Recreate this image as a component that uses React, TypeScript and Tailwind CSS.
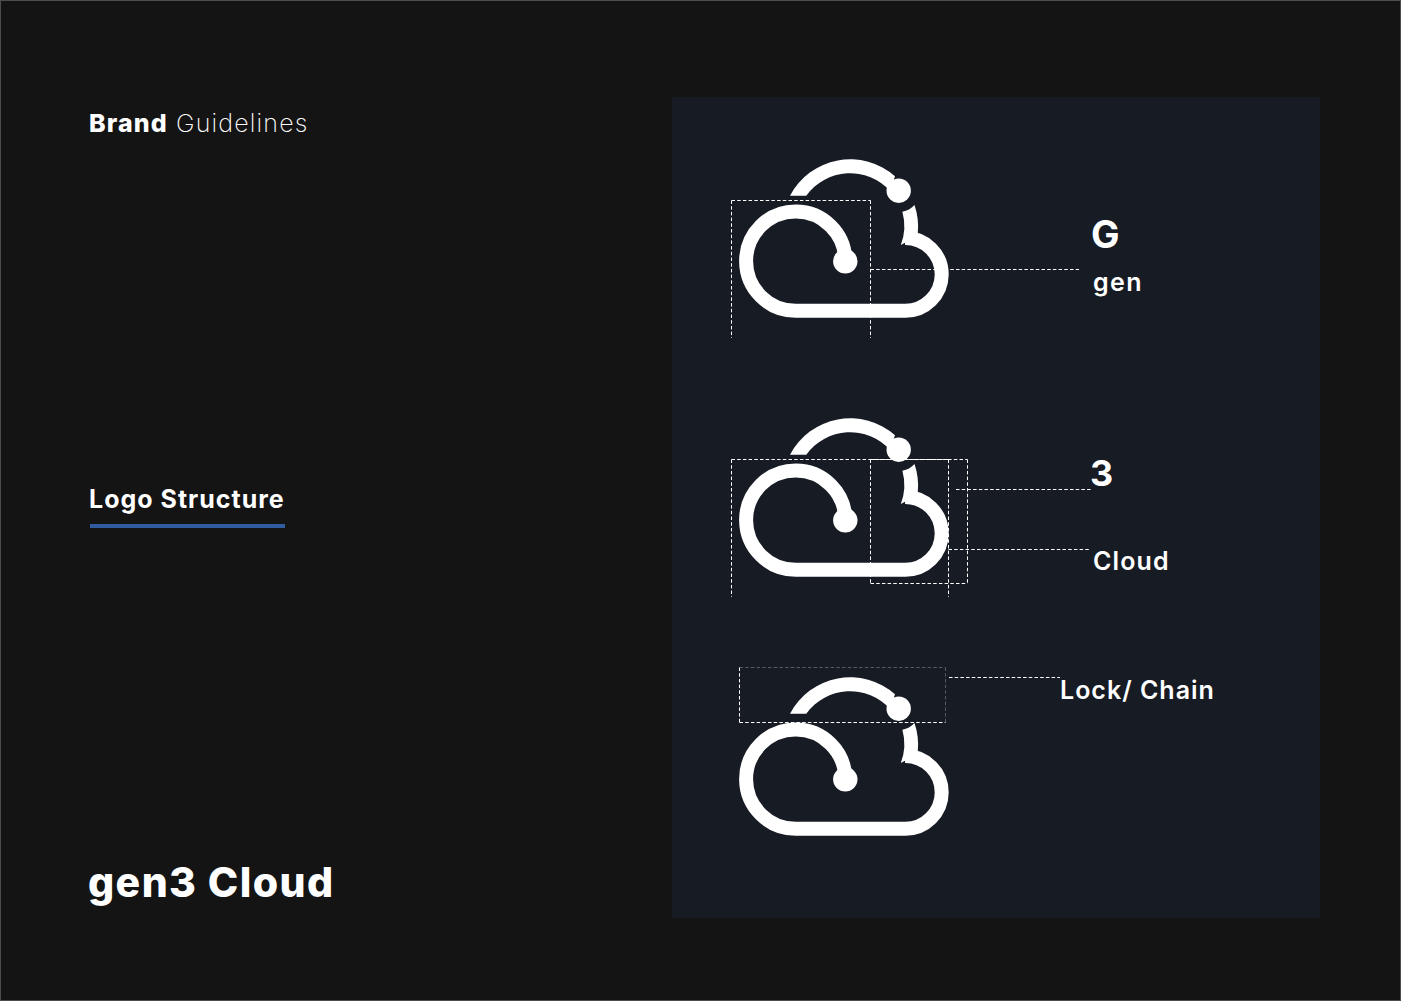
const font = "font-['Inter','Liberation_Sans',sans-serif]"

function Logo() {
  return (
    <svg viewBox="739 158 211 161" width={211} height={161} className="relative block shrink-0" fill="none">
      <path
        d="M845.3 261 A49.6 49.6 0 1 0 796 310.7 H905 A36.4 36.4 0 0 0 941.7 274.5 A36.4 36.4 0 0 0 905 238"
        stroke="#fff"
        strokeWidth={14}
      />
      <circle cx={845.3} cy={261.3} r={12.2} fill="#fff" />
      <path d="M790 195.7 A67.8 67.8 0 0 1 895 176.3 L890 191 A53.8 53.8 0 0 0 806.3 195.7 Z" fill="#fff" />
      <circle cx={898.7} cy={190.7} r={12.2} fill="#fff" />
      <path d="M902.4 211.7 Q909.5 210.5 914.5 205 A67.8 67.8 0 0 1 917.8 233 L910 240 L900.8 245 A53.8 53.8 0 0 0 902.4 211.7 Z" fill="#fff" />
    </svg>
  )
}

type Seg = [number, number, number, number, string?]

// dashed construction lines, given in page coordinates
function Guides({ viewY, segs }: { viewY: number; segs: Seg[] }) {
  return (
    <svg viewBox={`672 ${viewY} 648 259`} width={648} height={259} className="absolute inset-0 overflow-visible">
      {segs.map(([x1, y1, x2, y2, color], i) => (
        <line key={i} x1={x1} y1={y1} x2={x2} y2={y2} stroke={color ?? '#fff'} strokeWidth={1} strokeDasharray="3.5 2.2" />
      ))}
    </svg>
  )
}

function DiagramRow({ viewY, segs, children }: { viewY: number; segs: Seg[]; children: React.ReactNode }) {
  return (
    <div className="relative flex h-[259px] items-start pl-[67px] pt-[8px]">
      <Guides viewY={viewY} segs={segs} />
      <Logo />
      {children}
    </div>
  )
}

const dim = '#565a62'

export default function App() {
  return (
    <div className={`flex h-[1001px] w-[1401px] border border-[#4d4d4d] bg-[#141414] text-white ${font}`}>
      <div className="flex h-full w-[671px] flex-col pl-[88px]">
        <h2 className="mt-[106px] text-[25px] leading-[32px] tracking-[1.15px]">
          <span className="font-extrabold">Brand</span> <span className="font-extralight">Guidelines</span>
        </h2>
        <div className="mt-[344px] w-[196px]">
          <h3 className="text-[25px] leading-[32px] font-bold tracking-[1px] whitespace-nowrap">Logo Structure</h3>
          <div className="ml-px mt-[8.5px] h-[4.5px] w-[195px] bg-[#315da0]" />
        </div>
        <h1 className="-ml-px mt-[329px] text-[41px] leading-[50px] font-extrabold tracking-[1.4px]">gen3 Cloud</h1>
      </div>

      <div className="mt-[96px] h-[821px] w-[648px] bg-[#171b24] pt-[53px]">
        <DiagramRow
          viewY={150}
          segs={[
            [731.5, 200.5, 870.5, 200.5],
            [731.5, 200.5, 731.5, 338],
            [870.5, 200.5, 870.5, 338],
            [870.5, 269.5, 1079, 269.5],
          ]}
        >
          <div className="relative ml-[141px] mt-[56px] flex flex-col items-start">
            <span className="text-[38px] leading-[40px] font-bold">G</span>
            <span className="ml-[2px] mt-[13px] text-[25px] leading-[30px] font-semibold tracking-[1.4px]">gen</span>
          </div>
        </DiagramRow>

        <DiagramRow
          viewY={409}
          segs={[
            [731.5, 459.5, 967.5, 459.5],
            [870.5, 459.5, 948.5, 459.5],
            [731.5, 459.5, 731.5, 597],
            [870.5, 459.5, 870.5, 583.5],
            [948.5, 459.5, 948.5, 597],
            [967.5, 459.5, 967.5, 583.5],
            [870.5, 583.5, 967.5, 583.5],
            [956, 489.5, 1091, 489.5],
            [948.5, 549.5, 1091, 549.5],
          ]}
        >
          <div className="relative ml-[140px] mt-[36px] flex flex-col items-start">
            <span className="text-[36px] leading-[40px] font-bold">3</span>
            <span className="ml-[3px] mt-[53px] text-[25px] leading-[30px] font-semibold tracking-[1.1px]">Cloud</span>
          </div>
        </DiagramRow>

        <DiagramRow
          viewY={668}
          segs={[
            [739.5, 667.5, 945.5, 667.5, dim],
            [945.5, 667.5, 945.5, 722.5, dim],
            [739.5, 667.5, 739.5, 722.5],
            [739.5, 722.5, 945.5, 722.5],
            [949, 677.5, 1060, 677.5],
          ]}
        >
          <span className="relative ml-[110px] -mt-px text-[25px] leading-[30px] font-semibold tracking-[1px] whitespace-nowrap">Lock/ Chain</span>
        </DiagramRow>
      </div>
    </div>
  )
}
